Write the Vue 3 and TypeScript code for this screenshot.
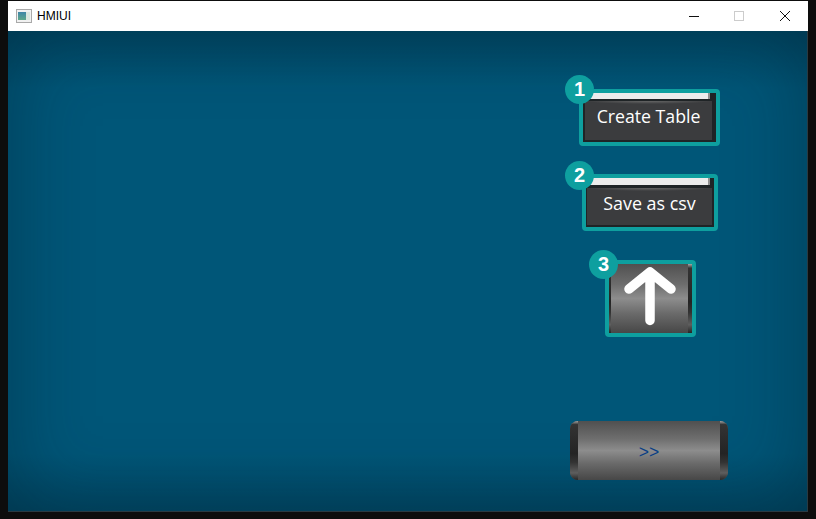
<script setup lang="ts">
const actions = [
  { label: 'Create Table', badge: 1, kind: 'create' },
  { label: 'Save as csv', badge: 2, kind: 'save' },
]
</script>

<template>
  <div class="desktop">
    <div class="window">
      <header class="titlebar">
        <div class="title">
          <svg class="app-icon" width="16" height="14" viewBox="0 0 16 14">
            <defs>
              <linearGradient id="pic" x1="0" y1="0" x2="0" y2="1">
                <stop offset="0" stop-color="#3f86a8" />
                <stop offset="1" stop-color="#5fa88a" />
              </linearGradient>
            </defs>
            <rect x="0.5" y="0.5" width="15" height="13" fill="#f1f1f1" stroke="#a9a9a9" />
            <rect x="2" y="3" width="8" height="8" fill="url(#pic)" />
            <rect x="10" y="3" width="4" height="8" fill="#dbe6de" />
          </svg>
          <span>HMIUI</span>
        </div>
        <div class="controls">
          <svg width="46" height="30" viewBox="0 0 46 30"><path d="M19 15.5h10" stroke="#111" fill="none" /></svg>
          <svg width="46" height="30" viewBox="0 0 46 30"><rect x="18.5" y="10.5" width="9" height="9" stroke="#cccccc" fill="none" /></svg>
          <svg width="46" height="30" viewBox="0 0 46 30"><path d="M18 10l10 10M28 10L18 20" stroke="#111" fill="none" /></svg>
        </div>
      </header>
      <main class="content">
        <div class="column">
          <div v-for="a in actions" :key="a.badge" class="frame" :class="a.kind">
            <span class="badge">{{ a.badge }}</span>
            <button class="text-btn">
              <span class="shine"></span>
              <span class="label">{{ a.label }}</span>
            </button>
          </div>
          <div class="frame up">
            <span class="badge">3</span>
            <button class="metal up-btn">
              <svg width="64" height="64" viewBox="0 0 64 64">
                <path d="M31 53.5V5M10 22L31 5l21 17" fill="none" stroke="#fff" stroke-width="9.5" stroke-linecap="round" stroke-linejoin="round" />
              </svg>
            </button>
          </div>
          <button class="metal next">&gt;&gt;</button>
        </div>
      </main>
    </div>
  </div>
</template>

<style>
html, body { margin: 0; background: #0d0d0d; }
</style>

<style scoped>
.desktop {
  width: 816px;
  height: 519px;
  padding: 1px 8px 0;
  box-sizing: border-box;
  background: #0d0d0d;
  overflow: hidden;
}
.window {
  width: 800px;
  height: 511px;
  display: flex;
  flex-direction: column;
}
.titlebar {
  height: 30px;
  flex: none;
  background: #fff;
  display: flex;
  justify-content: space-between;
  align-items: center;
}
.title {
  display: flex;
  align-items: center;
  gap: 5px;
  padding-left: 8px;
  font: 12px "Liberation Sans", Arial, sans-serif;
  color: #000;
}
.app-icon { display: block; }
.controls { display: flex; }
.controls svg { display: block; }
.content {
  flex: 1;
  display: flex;
  justify-content: flex-end;
  padding-right: 79px;
  background:
    linear-gradient(180deg, rgba(0, 30, 45, 0.25), rgba(0, 30, 45, 0) 12%, rgba(0, 30, 45, 0) 88%, rgba(0, 30, 45, 0.25)),
    #005678;
  box-shadow: inset 0 0 80px rgba(0, 30, 45, 0.42);
  border-right: 1px solid #2a3a42;
  border-bottom: 1px solid #2a3a42;
  box-sizing: border-box;
}
.column {
  width: 158px;
  padding-top: 58px;
  display: flex;
  flex-direction: column;
  align-items: center;
}
.frame {
  position: relative;
  box-sizing: border-box;
  border: 4px solid #0e9f9f;
  border-radius: 4px;
  background: #1f2426;
}
.create { width: 141px; height: 57px; margin-left: 1px; padding: 0 4px 2px 2px; }
.save { width: 136px; height: 57px; margin-top: 28px; margin-left: 2px; padding: 0 2px 2px 1px; }
.up { width: 91px; height: 77px; margin-top: 29px; margin-left: 3px; padding: 0; }
.badge {
  position: absolute;
  left: -18px;
  top: -18px;
  width: 29px;
  height: 29px;
  border-radius: 50%;
  background: #0e9f9f;
  color: #fff;
  font: bold 20px/29px "Liberation Sans", Arial, sans-serif;
  text-align: center;
  z-index: 2;
}
.save .badge { left: -21px; top: -17px; }
.up .badge { left: -20px; top: -14px; }
.text-btn {
  display: flex;
  flex-direction: column;
  width: 100%;
  height: 100%;
  padding: 0;
  border: 0;
  background: transparent;
  color: #fff;
}
.shine {
  display: block;
  height: 6px;
  margin: 0 2px 2px 0;
  flex: none;
  box-sizing: border-box;
  background: #ececec;
  border-right: 2px solid #8f8f8f;
}
.save .shine { height: 7px; margin-bottom: 3px; }
.label {
  flex: 1;
  width: 100%;
  display: flex;
  align-items: center;
  justify-content: center;
  background: radial-gradient(ellipse 50% 3px at 50% 0, #666, transparent), #3b3c3e;
  font: 17.7px/1 "Open Sans", "Noto Sans", sans-serif;
  padding-bottom: 7px;
}
.save .label { font-size: 17.9px; padding-bottom: 6px; }
.metal {
  position: relative;
  overflow: hidden;
  border: 0;
  padding: 0;
  background: linear-gradient(180deg, #505050 0%, #6e6e6e 30%, #8d8d8d 50%, #6a6a6a 72%, #474747 100%);
  display: flex;
  align-items: center;
  justify-content: center;
}
.metal::before,
.metal::after {
  content: "";
  position: absolute;
  top: 0;
  bottom: 0;
  background: linear-gradient(180deg, #a8a8a8 0, #333 6%, #242424 55%, #333 70%, #5e5e5e 88%, #262626 100%);
}
.metal::before { left: 0; }
.metal::after { right: 0; }
.up-btn {
  width: 100%;
  height: 100%;
}
.up-btn::before { width: 2px; }
.up-btn::after { width: 4px; }
.up-btn svg { display: block; position: relative; z-index: 1; }
.next {
  width: 158px;
  height: 59px;
  margin-top: 84px;
  border-radius: 8px;
  color: #0a3f85;
  font: 17.5px "Liberation Sans", Arial, sans-serif;
  padding-top: 4px;
}
.next::before, .next::after { width: 8px; }
</style>
